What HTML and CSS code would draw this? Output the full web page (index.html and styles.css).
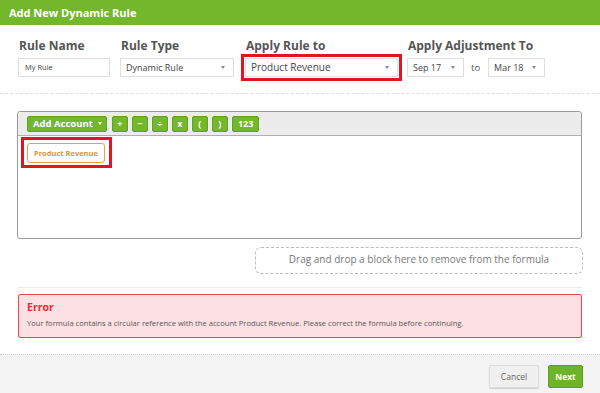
FILE: index.html
```html
<!DOCTYPE html>
<html lang="en">
<head>
    <meta charset="UTF-8">
    <title>Add New Dynamic Rule</title>
    <link rel="stylesheet" href="styles.css">
</head>
<body>
    <div class="modal">
        <div class="modal-header">Add New Dynamic Rule</div>

        <!-- Rule settings -->
        <div class="fields">
            <div class="field field-name">
                <label>Rule Name</label>
                <div class="input">My Rule</div>
            </div>
            <div class="field field-type">
                <label>Rule Type</label>
                <div class="select">Dynamic Rule<span class="caret"></span></div>
            </div>
            <div class="field field-apply">
                <label>Apply Rule to</label>
                <div class="select big highlight">Product Revenue<span class="caret"></span></div>
            </div>
            <div class="field">
                <label>Apply Adjustment To</label>
                <div class="range">
                    <div class="select small">Sep 17<span class="caret"></span></div>
                    <span class="to">to</span>
                    <div class="select small">Mar 18<span class="caret"></span></div>
                </div>
            </div>
        </div>

        <div class="divider"></div>

        <!-- Formula editor -->
        <div class="formula">
            <div class="toolbar">
                <button class="tool add">Add Account<span class="caret white"></span></button>
                <button class="tool">+</button>
                <button class="tool">&minus;</button>
                <button class="tool">&divide;</button>
                <button class="tool">x</button>
                <button class="tool">(</button>
                <button class="tool">)</button>
                <button class="tool num">123</button>
            </div>
            <div class="formula-body">
                <span class="block-mark"><span class="block">Product Revenue</span></span>
            </div>
        </div>

        <div class="drop-row">
            <div class="drop-zone">Drag and drop a block here to remove from the formula</div>
        </div>

        <div class="thin-line"></div>

        <div class="error">
            <div class="error-title">Error</div>
            <div class="error-text">Your formula contains a circular reference with the account Product Revenue. Please correct the formula before continuing.</div>
        </div>

        <div class="modal-footer">
            <button class="btn cancel">Cancel</button>
            <button class="btn next">Next</button>
        </div>
    </div>
</body>
</html>
```

FILE: styles.css
```css
body {
    margin: 0;
    font-family: "Open Sans", Arial, sans-serif;
    background-color: #fff;
    color: #555;
}

.modal {
    width: 600px;
    height: 393px;
    display: flex;
    flex-direction: column;
    overflow: hidden;
}

.modal-header {
    height: 25px;
    line-height: 25px;
    padding-left: 9px;
    background-color: #73b72b;
    color: #fff;
    font-size: 11px;
    font-weight: bold;
}

/* top row of fields */
.fields {
    display: flex;
    padding: 14px 0 0 18px;
    height: 40px;
}

.field label {
    display: block;
    font-size: 12px;
    font-weight: bold;
    color: #555;
    line-height: 14px;
    margin: 0 0 5px 1px;
}

.field-name { width: 102px; }
.field-type { width: 125px; }
.field-apply { width: 162px; }

.input,
.select {
    box-sizing: border-box;
    height: 19px;
    line-height: 17px;
    border: 1px solid #dedede;
    background-color: #fff;
    font-size: 9px;
    color: #444;
    padding-left: 6px;
    position: relative;
}

.input {
    width: 92px;
    font-size: 7.5px;
}

.select {
    width: 114px;
    padding-left: 5px;
}

.select.big {
    width: 153px;
    font-size: 10px;
}

.select.small {
    width: 57px;
}

.caret {
    position: absolute;
    right: 8px;
    top: 7px;
    border-left: 2.5px solid transparent;
    border-right: 2.5px solid transparent;
    border-top: 3px solid #888;
}

.caret.white {
    position: static;
    display: inline-block;
    vertical-align: middle;
    margin-left: 5px;
    border-top-color: #fff;
}

.range {
    display: flex;
    align-items: center;
}

.to {
    font-size: 9.5px;
    color: #555;
    margin: 0 8px 0 7px;
}

.highlight {
    outline: 3px solid #e3141d;
    outline-offset: 1px;
}

.divider {
    border-top: 1px dashed #ddd;
    margin-top: 14px;
}

/* formula editor */
.formula {
    margin: 17px 18px 0 17px;
    height: 126px;
    border: 1px solid #9a9a9a;
    border-radius: 3px;
    display: flex;
    flex-direction: column;
}

.toolbar {
    display: flex;
    gap: 4px;
    align-items: center;
    height: 23px;
    padding-left: 9px;
    background-color: #ececec;
    border-bottom: 1px solid #b0b0b0;
    border-radius: 3px 3px 0 0;
}

.tool {
    box-sizing: border-box;
    height: 16px;
    min-width: 16px;
    padding: 0 4px;
    border: 1px solid #62a31e;
    border-radius: 2px;
    background-color: #73b72b;
    color: #fff;
    font-family: "Open Sans", Arial, sans-serif;
    font-size: 9px;
    font-weight: bold;
    line-height: 14px;
    white-space: nowrap;
}

.tool.add {
    font-size: 9.5px;
    padding: 0 4px 0 5px;
    margin-right: 1px;
}

.tool.num {
    padding: 0 5px;
}

.formula-body {
    flex-grow: 1;
    padding: 1px 0 0 3px;
}

/* red annotation box around the block */
.block-mark {
    display: inline-block;
    border: 3px solid #e3141d;
    padding: 3px 4px 2px 3px;
}

.block {
    display: block;
    box-sizing: border-box;
    height: 20px;
    line-height: 18px;
    padding: 0 6px;
    border: 1px solid #e9a04b;
    border-radius: 3px;
    color: #e39233;
    font-size: 7.5px;
    font-weight: bold;
}

.drop-row {
    display: flex;
    justify-content: flex-end;
    padding: 8px 17px 0 0;
}

.drop-zone {
    box-sizing: border-box;
    width: 328px;
    height: 27px;
    line-height: 23px;
    border: 1.5px dashed #bcbcbc;
    border-radius: 6px;
    text-align: center;
    font-size: 10px;
    color: #777;
}

.thin-line {
    border-top: 1px solid #eee;
    margin: 13px 18px 0 18px;
}

.error {
    box-sizing: border-box;
    height: 44px;
    margin: 6px 18px 0 18px;
    padding: 5px 8px 0 8px;
    background-color: #fde0e3;
    border: 1px solid #f0474f;
    border-radius: 2px;
}

.error-title {
    color: #ec2b30;
    font-size: 10.5px;
    font-weight: bold;
    line-height: 14px;
}

.error-text {
    margin-top: 3px;
    font-size: 7.6px;
    color: #555;
    line-height: 12px;
}

/* footer */
.modal-footer {
    margin-top: 16px;
    flex-grow: 1;
    border-top: 1px dotted #ccc;
    background-color: #f3f3f3;
    display: flex;
    justify-content: flex-end;
    align-items: flex-start;
    gap: 9px;
    padding: 10px 17px 0 0;
}

.btn {
    box-sizing: border-box;
    height: 23px;
    border-radius: 2px;
    font-family: "Open Sans", Arial, sans-serif;
    font-size: 8.5px;
    padding: 0;
}

.cancel {
    width: 50px;
    background-color: #f0f0f0;
    border: 1px solid #ddd;
    color: #666;
    box-shadow: 0 1px 1px rgba(0, 0, 0, 0.15);
}

.next {
    width: 35px;
    background-color: #6fb32a;
    border: 1px solid #5e9d20;
    color: #fff;
    font-weight: bold;
}
```
